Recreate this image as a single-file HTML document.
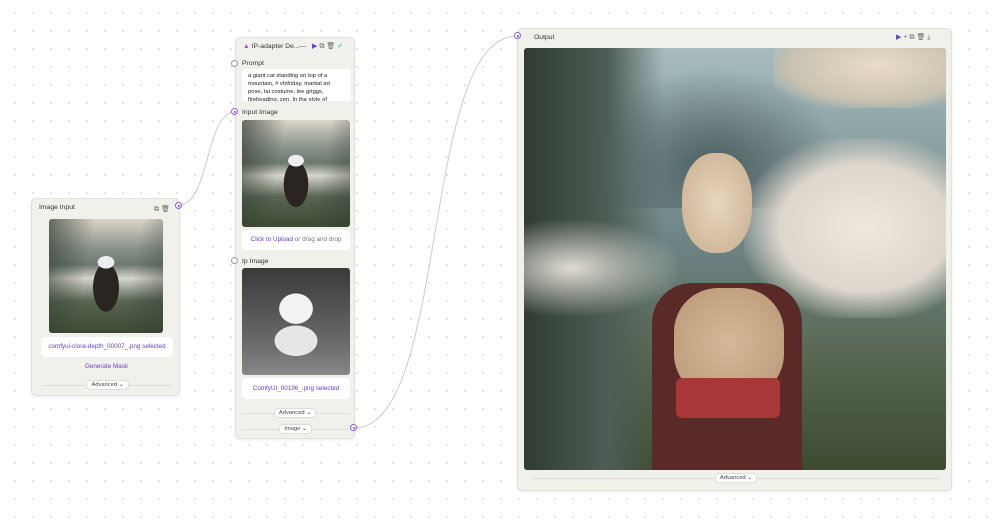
<!DOCTYPE html>
<html><head><style>
*{box-sizing:border-box;margin:0;padding:0}
body{width:1000px;height:532px;overflow:hidden;background:#fff;background-image:radial-gradient(circle,#d4d4d4 0.7px,transparent 1.1px);background-size:18px 18px;background-position:6px 4px;font-family:"Liberation Sans",sans-serif;position:relative;font-size:7px;color:#333}
.node{position:absolute;background:#f1f1ec;border:1px solid #e2e2dc;border-radius:5px;box-shadow:0 1px 3px rgba(0,0,0,.08)}
.abs{position:absolute}
.title{position:absolute;font-size:6.8px;color:#333}
.box{position:absolute;background:#fff;border-radius:4px;text-align:center;color:#6a3fd0;font-size:6.3px}
.pill{position:absolute;background:#fff;border:1px solid #ddd;border-radius:4px;font-size:5.8px;color:#444;text-align:center;line-height:9px;height:10px}
.line{position:absolute;height:1px;background:#ddd}
.dot{position:absolute;width:7px;height:7px;border-radius:50%;background:#fff;border:1px solid #8a5cf0}
.dot::after{content:"";position:absolute;left:1.5px;top:1.5px;width:2px;height:2px;border-radius:50%;background:#7c3aed}
.odot{position:absolute;width:7px;height:7px;border-radius:50%;background:#fff;border:1px solid #999}
.panda{background:radial-gradient(ellipse 12% 9% at 50% 38%,#eee 60%,transparent 62%),radial-gradient(ellipse 16% 30% at 50% 60%,#2a2520 70%,transparent 72%),radial-gradient(ellipse 11% 14% at 50% 70%,#b9a98a 70%,transparent 72%),linear-gradient(100deg,rgba(50,60,50,.7) 0%,transparent 35%,transparent 70%,rgba(50,60,50,.5) 100%),linear-gradient(180deg,#dcd6c8 0%,#8b938d 25%,#6d7a6e 40%,#d6d5cd 52%,#566451 72%,#3d4a33 100%)}
.kitten{background:radial-gradient(ellipse 22% 20% at 50% 38%,#f2f2f2 70%,transparent 72%),radial-gradient(ellipse 28% 20% at 50% 68%,#e6e6e6 70%,transparent 72%),linear-gradient(180deg,#3a3a3a,#6a6a6a 70%,#888)}
</style></head><body>
<svg class="abs" style="left:0;top:0" width="1000" height="532"><path d="M179 205 C210 205 205 112 235 112" stroke="#ccc" fill="none" stroke-width="1"/><path d="M354 428 C450 428 420 36 517 36" stroke="#ccc" fill="none" stroke-width="1"/></svg>

<div class="node" style="left:31px;top:198px;width:149px;height:198px">
<div class="title" style="left:7px;top:5px">Image Input</div>
<div class="abs" style="left:122px;top:6px;font-size:7px;color:#666">⧉ 🗑</div>
<div class="abs panda" style="left:17px;top:20px;width:114px;height:114px;border-radius:3px"></div>
<div class="box" style="left:9px;top:138px;width:132px;height:20px;line-height:20px">comfyui-clora-depth_00007_.png selected</div>
<div class="abs" style="left:0;width:149px;top:164px;text-align:center;color:#6a3fd0;font-size:6.3px">Generate Mask</div>
<div class="line" style="left:10px;top:186px;width:129px"></div>
<div class="pill" style="left:54px;top:181px;width:43px">Advanced ⌄</div>
</div>
<div class="dot" style="left:175px;top:202px"></div>

<div class="node" style="left:235px;top:37px;width:120px;height:402px">
<div class="title" style="left:7px;top:5px;color:#333"><span style="color:#a050d0">▲</span> IP-adapter De...</div>
<div class="abs" style="left:63px;top:4px;font-size:7px;color:#666;letter-spacing:2px">— <span style="color:#6a3fd0">▶</span>⧉🗑<span style="color:#2a9">✓</span></div>
<div class="title" style="left:6px;top:22px">Prompt</div>
<div class="abs" style="left:6px;top:31px;width:109px;height:32px;background:#fff;border-radius:3px;font-size:5.8px;line-height:8px;padding:3px 10px 0 6px;overflow:hidden;color:#222">a giant cat standing on top of a mountain, # vfxfriday, martial art pose, tai costume, lee griggs, fireheading, zen. In the style of</div>
<div class="title" style="left:6px;top:71px">Input Image</div>
<div class="abs panda" style="left:6px;top:82px;width:108px;height:107px;border-radius:3px"></div>
<div class="box" style="left:6px;top:192px;width:108px;height:20px;line-height:20px">Click to Upload <span style="color:#777">or drag and drop</span></div>
<div class="title" style="left:6px;top:220px">Ip Image</div>
<div class="abs kitten" style="left:6px;top:230px;width:108px;height:107px;border-radius:3px"></div>
<div class="box" style="left:6px;top:340px;width:108px;height:21px;line-height:21px">ComfyUI_00196_.png selected</div>
<div class="line" style="left:6px;top:375px;width:108px"></div>
<div class="pill" style="left:38px;top:370px;width:42px">Advanced ⌄</div>
<div class="line" style="left:6px;top:391px;width:108px"></div>
<div class="pill" style="left:43px;top:386px;width:33px">Image ⌄</div>
</div>
<div class="odot" style="left:231px;top:60px"></div>
<div class="dot" style="left:231px;top:108px"></div>
<div class="odot" style="left:231px;top:257px"></div>
<div class="dot" style="left:350px;top:424px"></div>

<div class="node" style="left:517px;top:28px;width:435px;height:463px">
<div class="title" style="left:16px;top:5px">Output</div>
<div class="abs" style="left:378px;top:4px;font-size:7px;color:#666;letter-spacing:2px"><span style="color:#6a3fd0">▶</span>+⧉🗑⤓</div>
<div class="abs" style="left:6px;top:19px;width:422px;height:422px;border-radius:3px;overflow:hidden;background:linear-gradient(180deg,#a8bcc0 0%,#8ea4a6 20%,#6e8586 45%,#5b6b58 70%,#3d4a30 100%)">
<div class="abs" style="left:0;top:0;width:140px;height:422px;background:linear-gradient(90deg,#2f3b33,#4e5d55 60%,transparent)"></div>
<div class="abs" style="left:60px;top:20px;width:260px;height:140px;background:radial-gradient(ellipse at 50% 70%,#4d5f62,transparent 70%)"></div>
<div class="abs" style="left:250px;top:0;width:172px;height:60px;background:radial-gradient(ellipse at 60% 30%,#e8dcc6,#c9c2b0 60%,transparent 80%)"></div>
<div class="abs" style="left:220px;top:90px;width:202px;height:180px;background:radial-gradient(ellipse at 60% 50%,#efe8df,#ddd6cc 50%,transparent 75%)"></div>
<div class="abs" style="left:0;top:170px;width:160px;height:100px;background:radial-gradient(ellipse at 30% 50%,#e0dcd4,transparent 70%)"></div>
<div class="abs" style="left:128px;top:235px;width:150px;height:190px;background:#5a2a28;border-radius:40px 40px 0 0"></div>
<div class="abs" style="left:150px;top:240px;width:110px;height:110px;background:radial-gradient(ellipse,#d6b898,#b89876);border-radius:40%"></div>
<div class="abs" style="left:152px;top:330px;width:104px;height:40px;background:#a83838;border-radius:6px"></div>
<div class="abs" style="left:158px;top:105px;width:70px;height:100px;background:radial-gradient(ellipse,#e8d6bf,#c8ad8e);border-radius:45%"></div>
</div>
<div class="line" style="left:14px;top:449px;width:407px"></div>
<div class="pill" style="left:197px;top:444px;width:42px">Advanced ⌄</div>
</div>
<div class="dot" style="left:514px;top:32px"></div>
</body></html>
